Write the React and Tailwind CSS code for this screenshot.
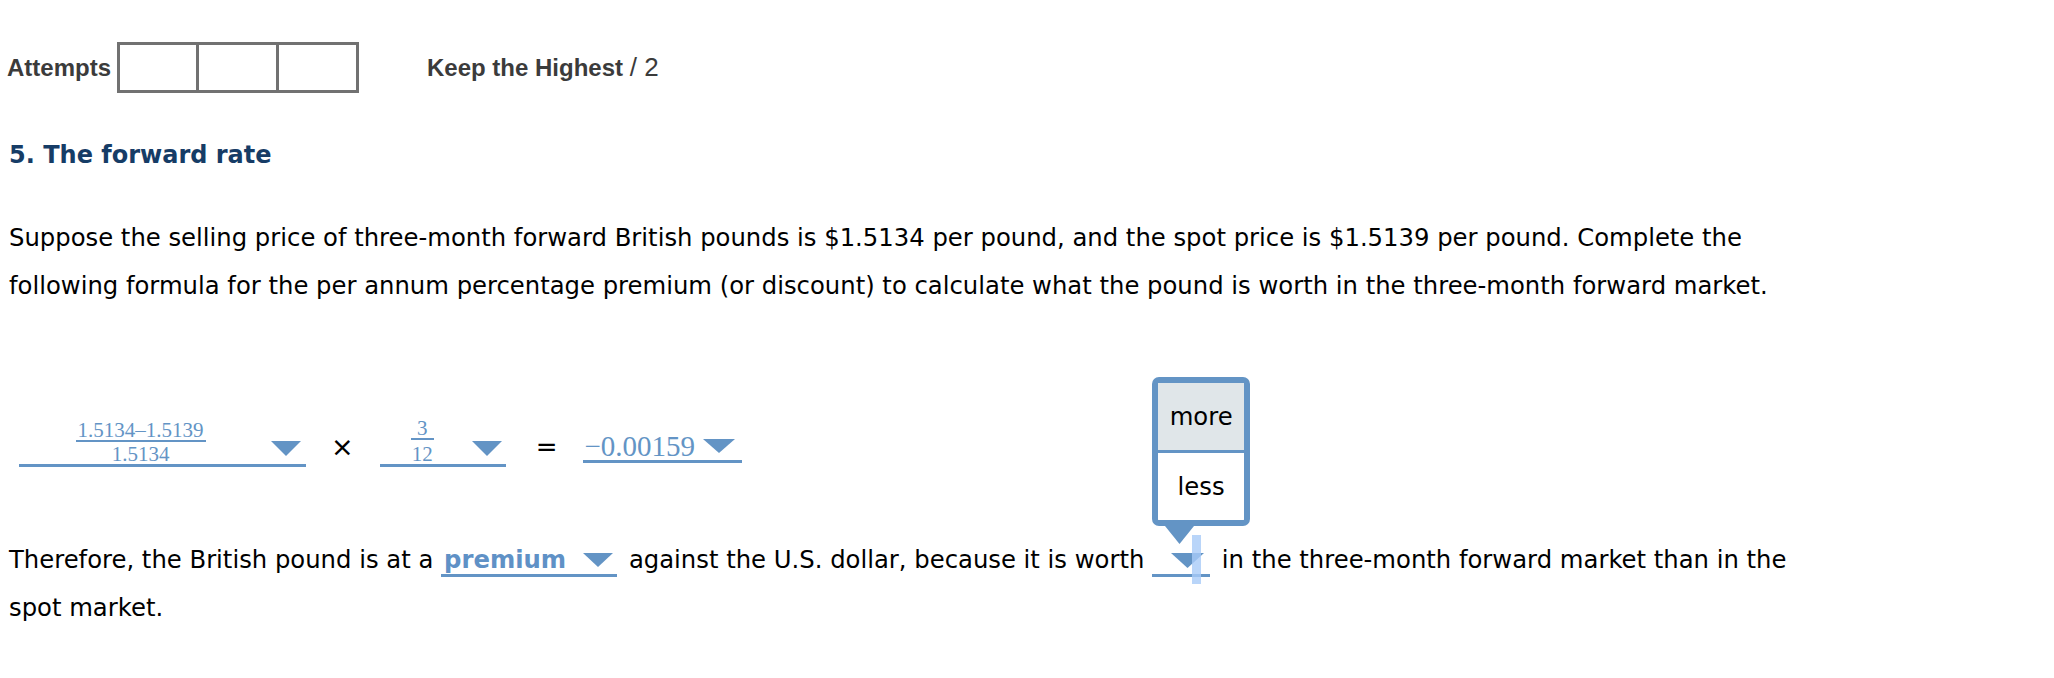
import React from "react";

function Arrow({ w = 30, h = 15, className = "" }) {
  return (
    <svg width={w} height={h} viewBox={`0 0 ${w} ${h}`} className={`block shrink-0 ${className}`}>
      <polygon points={`0,0 ${w},0 ${w / 2},${h}`} fill="#6394c5" />
    </svg>
  );
}

function Fraction({ top, bottom, gap = "pt-[3px]" }) {
  return (
    <div className="flex flex-col items-stretch text-center font-['Liberation_Serif',serif] text-[21px] text-[#6394c5]">
      <span className="px-[2px] leading-[20px]">{top}</span>
      <span className={`border-t-2 border-[#6394c5] px-[1px] leading-[19px] ${gap}`}>{bottom}</span>
    </div>
  );
}

export default function App() {
  return (
    <div className="min-h-screen bg-white pl-[9px] font-['DejaVu_Sans',Verdana,sans-serif] text-black">
      {/* attempts header */}
      <div className="-ml-[2px] flex items-center pt-[42px] font-['Liberation_Sans',Arial,sans-serif] text-[#3b3b3b]">
        <span className="text-[24px] font-bold">Attempts</span>
        <div className="ml-[6px] flex h-[51px] border-[3px] border-[#717171]">
          <div className="w-[76px]" />
          <div className="w-[80px] border-l-[3px] border-[#717171]" />
          <div className="w-[80px] border-l-[3px] border-[#717171]" />
        </div>
        <span className="ml-[68px] text-[24px] font-bold">
          Keep the Highest <span className="text-[26px] font-normal">/ 2</span>
        </span>
      </div>

      <h2 className="mt-[48px] text-[24px] font-bold leading-[28px] text-[#163c66]">5. The forward rate</h2>

      <p className="mt-[45px] text-[24.3px] leading-[48px]">
        Suppose the selling price of three-month forward British pounds is $1.5134 per pound, and the spot price is $1.5139 per pound. Complete the
        <br />
        following formula for the per annum percentage premium (or discount) to calculate what the pound is worth in the three-month forward market.
      </p>

      {/* formula */}
      <div className="ml-[10px] mt-[108px] flex items-end">
        <div className="flex items-end border-b-[3px] border-[#6394c5] pr-[5px]">
          <div className="flex w-[243px] justify-center">
            <Fraction top="1.5134–1.5139" bottom="1.5134" />
          </div>
          <Arrow w={30} h={15} className="mb-[8px] ml-[9px]" />
        </div>
        <span className="mb-[8px] ml-[25px] font-['DejaVu_Sans',sans-serif] text-[27px] leading-[24px]">×</span>
        <div className="ml-[26px] flex items-end border-b-[3px] border-[#6394c5] pr-[4px]">
          <div className="flex w-[85px] justify-center">
            <Fraction top="3" bottom="12" gap="pt-[5px]" />
          </div>
          <Arrow w={30} h={15} className="mb-[8px] ml-[7px]" />
        </div>
        <span className="mb-[8px] ml-[30px] font-['DejaVu_Sans',sans-serif] text-[26px] leading-[24px]">=</span>
        <div className="mb-[4px] ml-[26px] flex items-center border-b-[3px] border-[#6394c5] pl-[1px] pr-[7px]">
          <span className="font-['Liberation_Serif',serif] text-[29px] leading-[28px] text-[#6394c5]">−0.00159</span>
          <Arrow w={32} h={14} className="ml-[8px]" />
        </div>
      </div>

      {/* conclusion */}
      <div className="mt-[69px] text-[24.3px] leading-[48px]">
        Therefore, the British pound is at a{" "}
        <span className="inline-flex items-center border-b-[3px] border-[#6394c5] pb-[2px] pl-[3px] pr-[4px]">
          <span className="font-bold leading-[24px] text-[#5f91c6]">premium</span>
          <Arrow w={30} h={14} className="ml-[17px]" />
        </span>
        <span className="ml-[4px]"> against the U.S. dollar, because it is worth </span>
        <span className="relative inline-flex items-center border-b-[3px] border-[#6394c5] pb-[2px] pr-[6px]">
          <span className="w-[19px] overflow-hidden leading-[24px]">{"\u00a0"}</span>
          <Arrow w={33} h={15} />
          <span className="absolute left-[40px] top-[-13px] h-[49px] w-[9px] bg-[#a8cbf7] opacity-80" />
          <span className="absolute bottom-[30px] left-0 block w-[98px]">
            <span className="block overflow-hidden rounded-[7px] border-[6px] border-[#6394c5] bg-white text-center leading-[24px]">
              <span className="flex h-[67px] items-center justify-center bg-[#e0e6e9]">more</span>
              <span className="block h-[3px] bg-[#6394c5]" />
              <span className="flex h-[67px] items-center justify-center bg-white">less</span>
            </span>
            <svg width="29" height="18" viewBox="0 0 29 18" className="ml-[13px] block">
              <polygon points="0,0 29,0 14.5,18" fill="#6394c5" />
            </svg>
          </span>
        </span>{" "}
        <span className="ml-[4px]">in the three-month forward market than in the</span>
        <br />
        spot market.
      </div>
    </div>
  );
}
